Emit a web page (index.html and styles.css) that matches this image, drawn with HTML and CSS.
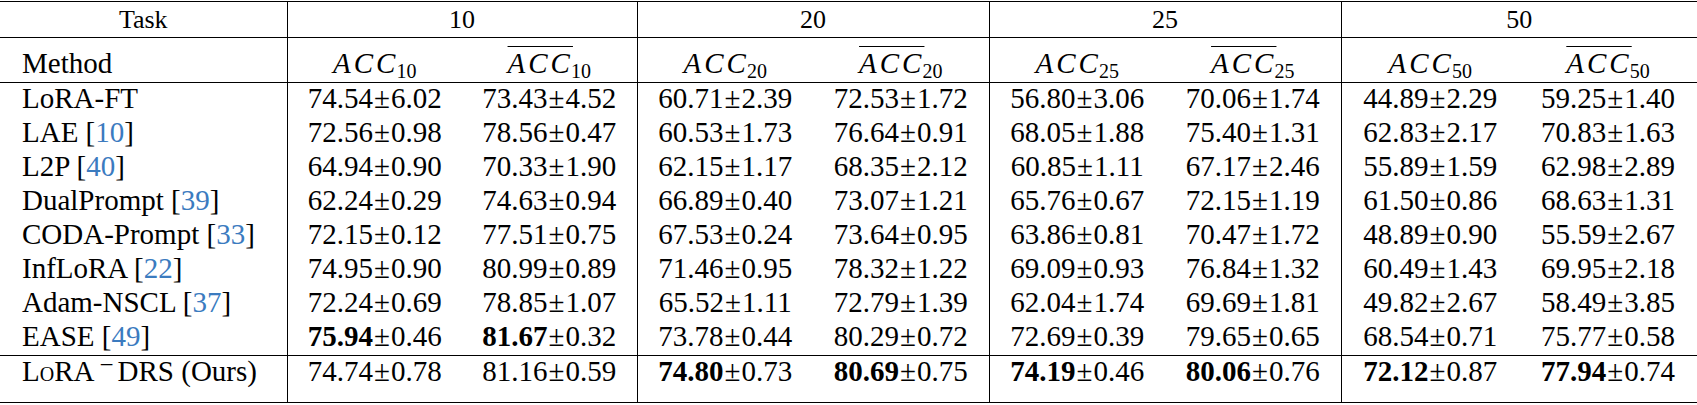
FILE: index.html
```html
<!DOCTYPE html>
<html lang="en">
<head>
    <meta charset="UTF-8">
    <meta name="viewport" content="width=device-width, initial-scale=1.0">
    <title>Resultados</title>
    <link rel="stylesheet" href="styles.css">
</head>
<body>
    <table class="tabela">
        <colgroup>
            <col class="c-metodo">
            <col class="c175"><col class="c175">
            <col class="c176"><col class="c176">
            <col class="c176"><col class="c176">
            <col class="c178"><col class="c178">
        </colgroup>
        <thead>
            <tr class="linha-task">
                <th>Task</th>
                <th colspan="2" class="grupo">10</th>
                <th colspan="2" class="grupo">20</th>
                <th colspan="2" class="grupo">25</th>
                <th colspan="2" class="grupo">50</th>
            </tr>
            <tr class="linha-metrica">
                <th class="metodo">Method</th>
                <th class="grupo"><span class="acc">ACC</span><sub>10</sub></th>
                <th><span class="acc barra">ACC</span><sub>10</sub></th>
                <th class="grupo"><span class="acc">ACC</span><sub>20</sub></th>
                <th><span class="acc barra">ACC</span><sub>20</sub></th>
                <th class="grupo"><span class="acc">ACC</span><sub>25</sub></th>
                <th><span class="acc barra">ACC</span><sub>25</sub></th>
                <th class="grupo"><span class="acc">ACC</span><sub>50</sub></th>
                <th><span class="acc barra">ACC</span><sub>50</sub></th>
            </tr>
        </thead>
        <tbody>
            <tr>
                <td class="metodo">LoRA-FT</td>
                <td class="grupo">74.54<span class="pm">±</span>6.02</td><td>73.43<span class="pm">±</span>4.52</td>
                <td class="grupo">60.71<span class="pm">±</span>2.39</td><td>72.53<span class="pm">±</span>1.72</td>
                <td class="grupo">56.80<span class="pm">±</span>3.06</td><td>70.06<span class="pm">±</span>1.74</td>
                <td class="grupo">44.89<span class="pm">±</span>2.29</td><td>59.25<span class="pm">±</span>1.40</td>
            </tr>
            <tr>
                <td class="metodo">LAE [<span class="cite">10</span>]</td>
                <td class="grupo">72.56<span class="pm">±</span>0.98</td><td>78.56<span class="pm">±</span>0.47</td>
                <td class="grupo">60.53<span class="pm">±</span>1.73</td><td>76.64<span class="pm">±</span>0.91</td>
                <td class="grupo">68.05<span class="pm">±</span>1.88</td><td>75.40<span class="pm">±</span>1.31</td>
                <td class="grupo">62.83<span class="pm">±</span>2.17</td><td>70.83<span class="pm">±</span>1.63</td>
            </tr>
            <tr>
                <td class="metodo">L2P [<span class="cite">40</span>]</td>
                <td class="grupo">64.94<span class="pm">±</span>0.90</td><td>70.33<span class="pm">±</span>1.90</td>
                <td class="grupo">62.15<span class="pm">±</span>1.17</td><td>68.35<span class="pm">±</span>2.12</td>
                <td class="grupo">60.85<span class="pm">±</span>1.11</td><td>67.17<span class="pm">±</span>2.46</td>
                <td class="grupo">55.89<span class="pm">±</span>1.59</td><td>62.98<span class="pm">±</span>2.89</td>
            </tr>
            <tr>
                <td class="metodo">DualPrompt [<span class="cite">39</span>]</td>
                <td class="grupo">62.24<span class="pm">±</span>0.29</td><td>74.63<span class="pm">±</span>0.94</td>
                <td class="grupo">66.89<span class="pm">±</span>0.40</td><td>73.07<span class="pm">±</span>1.21</td>
                <td class="grupo">65.76<span class="pm">±</span>0.67</td><td>72.15<span class="pm">±</span>1.19</td>
                <td class="grupo">61.50<span class="pm">±</span>0.86</td><td>68.63<span class="pm">±</span>1.31</td>
            </tr>
            <tr>
                <td class="metodo">CODA-Prompt [<span class="cite">33</span>]</td>
                <td class="grupo">72.15<span class="pm">±</span>0.12</td><td>77.51<span class="pm">±</span>0.75</td>
                <td class="grupo">67.53<span class="pm">±</span>0.24</td><td>73.64<span class="pm">±</span>0.95</td>
                <td class="grupo">63.86<span class="pm">±</span>0.81</td><td>70.47<span class="pm">±</span>1.72</td>
                <td class="grupo">48.89<span class="pm">±</span>0.90</td><td>55.59<span class="pm">±</span>2.67</td>
            </tr>
            <tr>
                <td class="metodo">InfLoRA [<span class="cite">22</span>]</td>
                <td class="grupo">74.95<span class="pm">±</span>0.90</td><td>80.99<span class="pm">±</span>0.89</td>
                <td class="grupo">71.46<span class="pm">±</span>0.95</td><td>78.32<span class="pm">±</span>1.22</td>
                <td class="grupo">69.09<span class="pm">±</span>0.93</td><td>76.84<span class="pm">±</span>1.32</td>
                <td class="grupo">60.49<span class="pm">±</span>1.43</td><td>69.95<span class="pm">±</span>2.18</td>
            </tr>
            <tr>
                <td class="metodo">Adam-NSCL [<span class="cite">37</span>]</td>
                <td class="grupo">72.24<span class="pm">±</span>0.69</td><td>78.85<span class="pm">±</span>1.07</td>
                <td class="grupo">65.52<span class="pm">±</span>1.11</td><td>72.79<span class="pm">±</span>1.39</td>
                <td class="grupo">62.04<span class="pm">±</span>1.74</td><td>69.69<span class="pm">±</span>1.81</td>
                <td class="grupo">49.82<span class="pm">±</span>2.67</td><td>58.49<span class="pm">±</span>3.85</td>
            </tr>
            <tr>
                <td class="metodo">EASE [<span class="cite">49</span>]</td>
                <td class="grupo"><b>75.94</b><span class="pm">±</span>0.46</td><td><b>81.67</b><span class="pm">±</span>0.32</td>
                <td class="grupo">73.78<span class="pm">±</span>0.44</td><td>80.29<span class="pm">±</span>0.72</td>
                <td class="grupo">72.69<span class="pm">±</span>0.39</td><td>79.65<span class="pm">±</span>0.65</td>
                <td class="grupo">68.54<span class="pm">±</span>0.71</td><td>75.77<span class="pm">±</span>0.58</td>
            </tr>
        </tbody>
        <tbody class="nosso">
            <tr>
                <td class="metodo"><span class="sc">LoRA</span><sup>−</sup>DRS (Ours)</td>
                <td class="grupo">74.74<span class="pm">±</span>0.78</td><td>81.16<span class="pm">±</span>0.59</td>
                <td class="grupo"><b>74.80</b><span class="pm">±</span>0.73</td><td><b>80.69</b><span class="pm">±</span>0.75</td>
                <td class="grupo"><b>74.19</b><span class="pm">±</span>0.46</td><td><b>80.06</b><span class="pm">±</span>0.76</td>
                <td class="grupo"><b>72.12</b><span class="pm">±</span>0.87</td><td><b>77.94</b><span class="pm">±</span>0.74</td>
            </tr>
        </tbody>
    </table>
</body>
</html>
```

FILE: styles.css
```css
* {
    margin: 0;
    padding: 0;
    box-sizing: border-box;
}
body {
    background-color: #ffffff;
    color: #000000;
    font-family: "Liberation Serif", "Times New Roman", serif;
    padding-top: 1px;
}
.tabela {
    width: 1697px;
    border-collapse: collapse;
    table-layout: fixed;
    border-top: 1px solid #000;
    border-bottom: 1px solid #000;
}
.c-metodo { width: 287px; }
.c175 { width: 175px; }
.c176 { width: 176px; }
.c178 { width: 178px; }

th, td {
    font-family: "Liberation Serif", "Times New Roman", serif;
    font-weight: normal;
    text-align: center;
    white-space: nowrap;
    font-size: 29px;
    line-height: 30px;
    padding: 0 0 4px;
}
.grupo {
    border-left: 1px solid #000;
}
.metodo {
    text-align: left;
    padding-left: 22px;
}
.linha-task th {
    font-size: 26px;
    line-height: 35px;
    padding: 0;
    border-bottom: 1px solid #000;
}
.linha-metrica th {
    line-height: 32px;
    padding-top: 9px;
    padding-bottom: 3px;
    border-bottom: 1px solid #000;
}
.acc {
    font-style: italic;
    letter-spacing: 3px;
    margin-right: -2px;
}
.acc.barra {
    text-decoration: overline;
    text-decoration-thickness: 1px;
}
sub {
    font-size: 20px;
    vertical-align: -5px;
    line-height: 0;
}
.pm {
    margin: 0 1px;
}
.cite {
    color: #3b7bbf;
}
b {
    font-weight: bold;
}
.nosso td {
    border-top: 1px solid #000;
    padding-bottom: 16px;
}
.sc {
    font-variant: small-caps;
}
sup {
    font-size: 25px;
    vertical-align: 8px;
    line-height: 0;
    padding: 0 4px 0 5px;
}
```
